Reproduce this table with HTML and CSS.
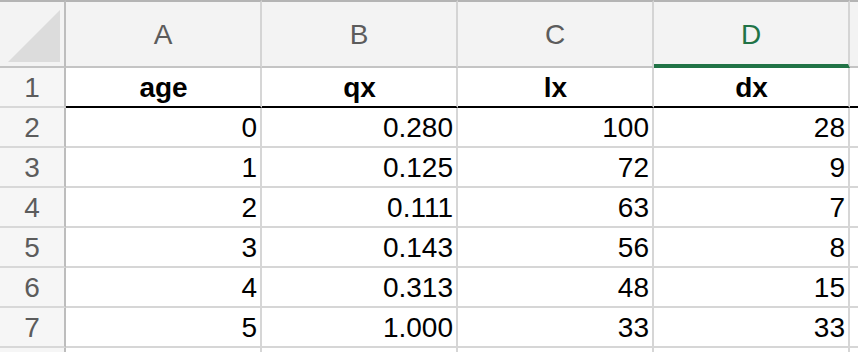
FILE: index.html
```html
<!DOCTYPE html>
<html>
<head>
<meta charset="utf-8">
<link rel="stylesheet" href="styles.css">
</head>
<body>
<div class="sheet">
  <div class="corner hdr">
    <svg class="tri" width="64" height="64" viewBox="0 0 64 64"><polygon points="8,60 60,60 60,8" fill="#dcdcdc"/></svg>
  </div>
  <div class="hdr col">A</div>
  <div class="hdr col">B</div>
  <div class="hdr col">C</div>
  <div class="hdr col sel">D</div>
  <div class="hdr col tail"></div>

  <div class="rh r1">1</div>
  <div class="c b r1">age</div>
  <div class="c b r1">qx</div>
  <div class="c b r1">lx</div>
  <div class="c b r1">dx</div>
  <div class="c tailc r1"></div>

  <div class="rh">2</div><div class="c n">0</div><div class="c n">0.280</div><div class="c n">100</div><div class="c n">28</div><div class="c tailc"></div>
  <div class="rh">3</div><div class="c n">1</div><div class="c n">0.125</div><div class="c n">72</div><div class="c n">9</div><div class="c tailc"></div>
  <div class="rh">4</div><div class="c n">2</div><div class="c n">0.111</div><div class="c n">63</div><div class="c n">7</div><div class="c tailc"></div>
  <div class="rh">5</div><div class="c n">3</div><div class="c n">0.143</div><div class="c n">56</div><div class="c n">8</div><div class="c tailc"></div>
  <div class="rh">6</div><div class="c n">4</div><div class="c n">0.313</div><div class="c n">48</div><div class="c n">15</div><div class="c tailc"></div>
  <div class="rh">7</div><div class="c n">5</div><div class="c n">1.000</div><div class="c n">33</div><div class="c n">33</div><div class="c tailc"></div>
  <div class="rh last"></div><div class="c last"></div><div class="c last"></div><div class="c last"></div><div class="c last"></div><div class="c tailc last"></div>
</div>
</body>
</html>
```

FILE: styles.css
```css
* { box-sizing: border-box; }
html, body { margin: 0; padding: 0; background: #ffffff; }
body { width: 858px; height: 352px; overflow: hidden; font-family: "Liberation Sans", Arial, sans-serif; }

.sheet {
  display: grid;
  grid-template-columns: 66px 196px 196px 196px 196px 8px;
  grid-template-rows: 68px repeat(7, 40px) 4px;
}

.hdr {
  background: #f3f3f3;
  border-top: 2px solid #b4b4b4;
  border-bottom: 2px solid #c4c4c4;
  border-right: 2px solid #d4d4d4;
  display: flex;
  align-items: center;
  justify-content: center;
  color: #5c5c5c;
  font-size: 28px;
  padding-top: 2px;
}
.corner {
  border-right: 2px solid #bdbdbd;
  background: #f3f3f3;
  padding: 0;
  align-items: flex-start;
  justify-content: flex-start;
}
.tri { display: block; }
.col.sel {
  color: #217346;
  border-bottom: 4px solid #217346;
  padding-top: 4px;
}
.col.tail { border-right: none; }

.rh {
  background: #f6f6f6;
  border-right: 2px solid #bdbdbd;
  border-bottom: 2px solid #d8d8d8;
  color: #5c5c5c;
  font-size: 28px;
  display: flex;
  align-items: center;
  justify-content: center;
  padding-top: 1px;
}

.c {
  border-right: 2px solid #d6d6d6;
  border-bottom: 2px solid #d6d6d6;
  font-size: 28px;
  color: #000;
  display: flex;
  align-items: center;
  padding: 1px 3px 0 4px;
}
.last { border-bottom: none; }
.c.tailc { border-right: none; }
.c.r1 { border-bottom: 2px solid #000; }
.c.b { font-weight: bold; justify-content: center; }
.c.n { justify-content: flex-end; }
```
